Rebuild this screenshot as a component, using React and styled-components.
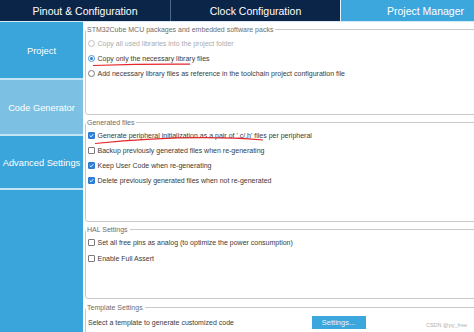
import React from "react";
import styled, { createGlobalStyle } from "styled-components";

const Global = createGlobalStyle`
  html, body { margin: 0; padding: 0; background: #fff; }
  body {
    width: 474px; height: 332px; overflow: hidden;
    font-family: "Liberation Sans", Arial, sans-serif;
  }
`;

const Frame = styled.div`
  position: relative;
  width: 474px;
  height: 332px;
  overflow: hidden;
  display: flex;
  flex-direction: column;
  background: #fff;
`;

const TopBar = styled.div`
  display: grid;
  grid-template-columns: 170px 170px 170px;
  height: 21px;
  flex-shrink: 0;
  border-bottom: 1px solid #d4e9f5;
`;

const Tab = styled.div`
  display: flex;
  align-items: center;
  justify-content: center;
  font-size: 10.5px;
  color: #fff;
  background: ${(p) => (p.$active ? "#3ca7dd" : "#0b2549")};
  border-left: ${(p) =>
    p.$first ? "none" : `1px solid ${p.$active ? "#e3f2fb" : "#4a6a90"}`};
`;

const Main = styled.div`
  flex: 1;
  display: flex;
  min-height: 0;
`;

const Sidebar = styled.div`
  width: 83px;
  flex-shrink: 0;
  background: #3aa5db;
  display: flex;
  flex-direction: column;
`;

const NavItem = styled.div`
  height: ${(p) => p.$h}px;
  flex-shrink: 0;
  display: flex;
  align-items: center;
  justify-content: center;
  padding-top: 2px;
  box-sizing: border-box;
  font-size: 9.3px;
  color: #fff;
  background: ${(p) => (p.$active ? "#7cc1e4" : "#3aa5db")};
  border-bottom: 2px solid #c4e3f4;
  white-space: nowrap;
`;

const Content = styled.div`
  flex: 1;
  min-width: 0;
  padding-left: 2px;
  overflow: hidden;
  display: flex;
  flex-direction: column;
`;

const Group = styled.div`
  flex-shrink: 0;
  margin-top: ${(p) => p.$mt}px;
  margin-right: -6px;
  height: ${(p) => p.$h}px;
  box-sizing: border-box;
  border: 1px solid #c9c9c9;
  border-radius: 3px;
  display: flex;
  flex-direction: column;
`;

const Legend = styled.div`
  align-self: flex-start;
  margin: -5px 0 0 0;
  padding: 0 2px 0 1px;
  background: #fff;
  font-size: 7px;
  line-height: 9px;
  color: #6d6d6d;
  white-space: nowrap;
`;

const Body = styled.div`
  padding: ${(p) => p.$pt}px 0 0 2px;
  display: flex;
  flex-direction: column;
`;

const Row = styled.div`
  height: ${(p) => p.$h || 15}px;
  display: flex;
  align-items: center;
  gap: 2.5px;
  font-size: 7px;
  color: ${(p) => (p.$disabled ? "#ababab" : "#3a3a3a")};
  white-space: nowrap;
`;

const Box = styled.span`
  width: 7px;
  height: 7px;
  box-sizing: border-box;
  flex-shrink: 0;
  border-radius: 1px;
  border: 1px solid ${(p) => (p.$checked ? "#2b7bd3" : "#7a7a7a")};
  background: ${(p) => (p.$checked ? "#2f80d8" : "#fff")};
  display: flex;
  align-items: center;
  justify-content: center;
`;

const Radio = styled.span`
  width: 7px;
  height: 7px;
  box-sizing: border-box;
  flex-shrink: 0;
  border-radius: 50%;
  border: 1px solid
    ${(p) => (p.$checked ? "#4a95dc" : p.$disabled ? "#c2c2c2" : "#7a7a7a")};
  background: #fff;
  display: flex;
  align-items: center;
  justify-content: center;
  &::after {
    content: "";
    width: 3px;
    height: 3px;
    border-radius: 50%;
    background: ${(p) => (p.$checked ? "#2b78cc" : "transparent")};
  }
`;

const TemplateLabel = styled.span`
  flex: 0 0 221px;
`;

const SettingsButton = styled.button`
  width: 54px;
  height: 13px;
  padding: 0;
  border: none;
  background: #3ca7dd;
  color: #eaf6fd;
  font-family: "Liberation Sans", Arial, sans-serif;
  font-size: 7.5px;
  display: flex;
  align-items: center;
  justify-content: center;
`;

const Watermark = styled.div`
  position: absolute;
  right: 7px;
  bottom: 4px;
  font-size: 5.5px;
  color: #b0b0b0;
  white-space: nowrap;
`;

const Marks = styled.svg`
  position: absolute;
  left: 0;
  top: 0;
  pointer-events: none;
`;

const Check = ({ checked }) => (
  <Box $checked={checked}>
    {checked && (
      <svg width="5" height="5" viewBox="0 0 10 10">
        <path d="M1.5 5.2 L4 7.6 L8.6 2.4" fill="none" stroke="#fff" strokeWidth="1.8" />
      </svg>
    )}
  </Box>
);

export default function App() {
  return (
    <>
      <Global />
      <Frame>
        <TopBar>
          <Tab $first>Pinout &amp; Configuration</Tab>
          <Tab>Clock Configuration</Tab>
          <Tab $active>Project Manager</Tab>
        </TopBar>
        <Main>
          <Sidebar>
            <NavItem $h={58}>Project</NavItem>
            <NavItem $h={56} $active>Code Generator</NavItem>
            <NavItem $h={54}>Advanced Settings</NavItem>
          </Sidebar>
          <Content>
            <Group $mt={7} $h={86}>
              <Legend>STM32Cube MCU packages and embedded software packs</Legend>
              <Body $pt={2}>
                <Row $disabled>
                  <Radio $disabled />
                  Copy all used libraries into the project folder
                </Row>
                <Row>
                  <Radio $checked />
                  Copy only the necessary library files
                </Row>
                <Row>
                  <Radio />
                  Add necessary library files as reference in the toolchain project configuration file
                </Row>
              </Body>
            </Group>
            <Group $mt={7} $h={100}>
              <Legend>Generated files</Legend>
              <Body $pt={1}>
                <Row>
                  <Check checked />
                  Generate peripheral initialization as a pair of '.c/.h' files per peripheral
                </Row>
                <Row>
                  <Check />
                  Backup previously generated files when re-generating
                </Row>
                <Row>
                  <Check checked />
                  Keep User Code when re-generating
                </Row>
                <Row>
                  <Check checked />
                  Delete previously generated files when not re-generated
                </Row>
              </Body>
            </Group>
            <Group $mt={7} $h={70}>
              <Legend>HAL Settings</Legend>
              <Body $pt={1}>
                <Row $h={15.6}>
                  <Check />
                  Set all free pins as analog (to optimize the power consumption)
                </Row>
                <Row $h={15.6}>
                  <Check />
                  Enable Full Assert
                </Row>
              </Body>
            </Group>
            <Group $mt={8} $h={40}>
              <Legend>Template Settings</Legend>
              <Body $pt={3}>
                <Row>
                  <TemplateLabel>Select a template to generate customized code</TemplateLabel>
                  <SettingsButton>Settings...</SettingsButton>
                </Row>
              </Body>
            </Group>
          </Content>
        </Main>
        <Marks width="474" height="332" viewBox="0 0 474 332">
          <path d="M93 65.5 Q 140 64 190 64.2" fill="none" stroke="#e5262a" strokeWidth="1.2" />
          <path d="M95 143.5 Q 190 134 263 140" fill="none" stroke="#e5262a" strokeWidth="1.2" />
        </Marks>
        <Watermark>CSDN @py_free</Watermark>
      </Frame>
    </>
  );
}
